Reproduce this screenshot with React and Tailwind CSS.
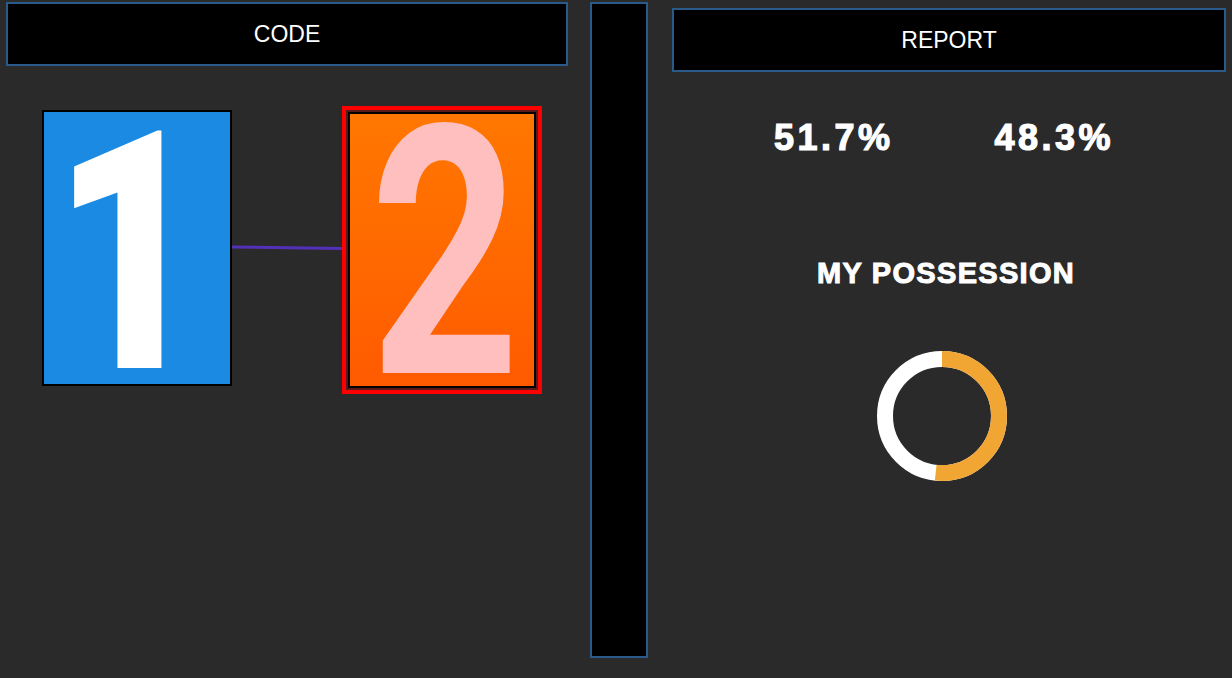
import React from 'react';

const SANS = { fontFamily: '"Liberation Sans", Arial, sans-serif' };

function Header({ children, className = '' }) {
  return (
    <div
      className={`h-[64px] bg-black border-2 border-[#2a5a8c] flex items-center justify-center text-white text-[23px] ${className}`}
    >
      {children}
    </div>
  );
}

function Donut({ value }) {
  const r = 57;
  const c = 2 * Math.PI * r;
  return (
    <svg width="130" height="130" viewBox="0 0 130 130">
      <circle cx="65" cy="65" r={r} fill="none" stroke="#ffffff" strokeWidth="16" />
      <circle
        cx="65"
        cy="65"
        r={r}
        fill="none"
        stroke="#f1a633"
        strokeWidth="16"
        strokeDasharray={`${(value / 100) * c} ${c}`}
        transform="rotate(-90 65 65)"
      />
    </svg>
  );
}

export default function App() {
  return (
    <div className="w-[1232px] h-[678px] bg-[#2a2a2a] flex overflow-hidden" style={SANS}>
      {/* Code panel */}
      <div className="w-[562px] ml-[6px] pt-[2px] flex flex-col">
        <Header>CODE</Header>

        <div className="flex items-start mt-[40px]">
          <div className="ml-[36px] mt-[4px] w-[190px] h-[276px] bg-[#1a8ae3] border-2 border-black flex items-center justify-center">
            <span
              className="text-white font-black leading-[240px] text-[334px] -ml-[14px] scale-x-80 translate-y-[6px]"
              style={{ fontFamily: 'Roboto, "Noto Sans", sans-serif' }}
            >
              1
            </span>
          </div>

          <svg width="110" height="6" className="mt-[139px] shrink-0">
            <line x1="0" y1="2" x2="110" y2="3.5" stroke="#5330b8" strokeWidth="3" />
          </svg>

          <div className="w-[200px] h-[288px] border-4 border-[#ff0000]">
            <div className="w-full h-full border-2 border-[#5a1a1a]">
              <div className="w-full h-full border-2 border-black bg-linear-to-b from-[#ff7700] to-[#ff5a00] flex items-center justify-center">
                <span
                  className="text-[#ffbfbf] font-bold leading-[240px] text-[348px] scale-x-75 ml-[6px] translate-y-[4px]"
                  style={{ fontFamily: 'Roboto, "Noto Sans", sans-serif' }}
                >
                  2
                </span>
              </div>
            </div>
          </div>
        </div>
      </div>

      {/* Divider */}
      <div className="ml-[22px] mt-[2px] w-[58px] h-[656px] bg-black border-2 border-[#2a5a8c]" />

      {/* Report panel */}
      <div className="ml-[24px] w-[554px] pt-[8px] flex flex-col items-center">
        <Header className="w-full">REPORT</Header>

        <div className="mt-[48px] flex justify-center gap-[101px] pr-[10px] text-white font-bold text-[36px] leading-none tracking-[3.5px] [-webkit-text-stroke:1.2px_white]">
          <span>51.7%</span>
          <span>48.3%</span>
        </div>

        <div className="mt-[103px] text-white font-bold text-[29px] leading-none tracking-[1.3px] -ml-[6px] [-webkit-text-stroke:1px_white]">
          MY POSSESSION
        </div>

        <div className="mt-[63px] -ml-[14px]">
          <Donut value={51.7} />
        </div>
      </div>
    </div>
  );
}
